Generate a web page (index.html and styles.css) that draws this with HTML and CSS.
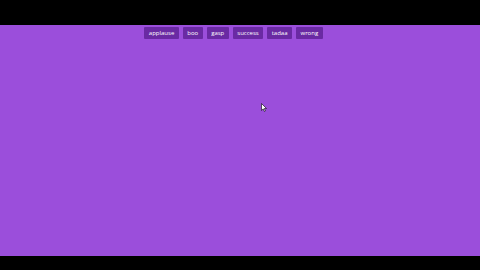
FILE: index.html
```html
<!DOCTYPE html>
<html lang="en">
<head>
  <meta charset="UTF-8" />
  <meta name="viewport" content="width=device-width, initial-scale=1.0" />
  <title>Soundboard</title>
  <link rel="stylesheet" href="styles.css">
</head>
<body>
  <div class="stage">
    <div class="sounds">
      <button class="sound">applause</button>
      <button class="sound">boo</button>
      <button class="sound">gasp</button>
      <button class="sound">success</button>
      <button class="sound">tadaa</button>
      <button class="sound">wrong</button>
    </div>
    <svg class="cursor" width="6" height="9" viewBox="0 0 6 9">
      <path d="M0.5 0.5 L0.5 7.5 L2.2 5.9 L3.4 8.5 L4.4 8 L3.3 5.5 L5.5 5.5 Z" fill="#fff" stroke="#000" stroke-width="0.6"/>
    </svg>
  </div>
</body>
</html>
```

FILE: styles.css
```css
body {
  margin: 0;
  background: #000;
  font-family: "Open Sans", Arial, sans-serif;
}
.stage {
  position: relative;
  height: 231px;
  margin-top: 25px;
  background: #9b4edb;
}
.sounds {
  display: flex;
  justify-content: center;
  gap: 4px;
  padding-top: 2px;
  padding-right: 13px;
}
.sound {
  font-family: inherit;
  font-size: 6px;
  font-weight: 500;
  color: #fff;
  background: #6a2aa3;
  border: none;
  border-radius: 1px;
  padding: 3px 4.5px;
  line-height: 6px;
  cursor: pointer;
}
.cursor {
  position: absolute;
  left: 261px;
  top: 78px;
}
```
